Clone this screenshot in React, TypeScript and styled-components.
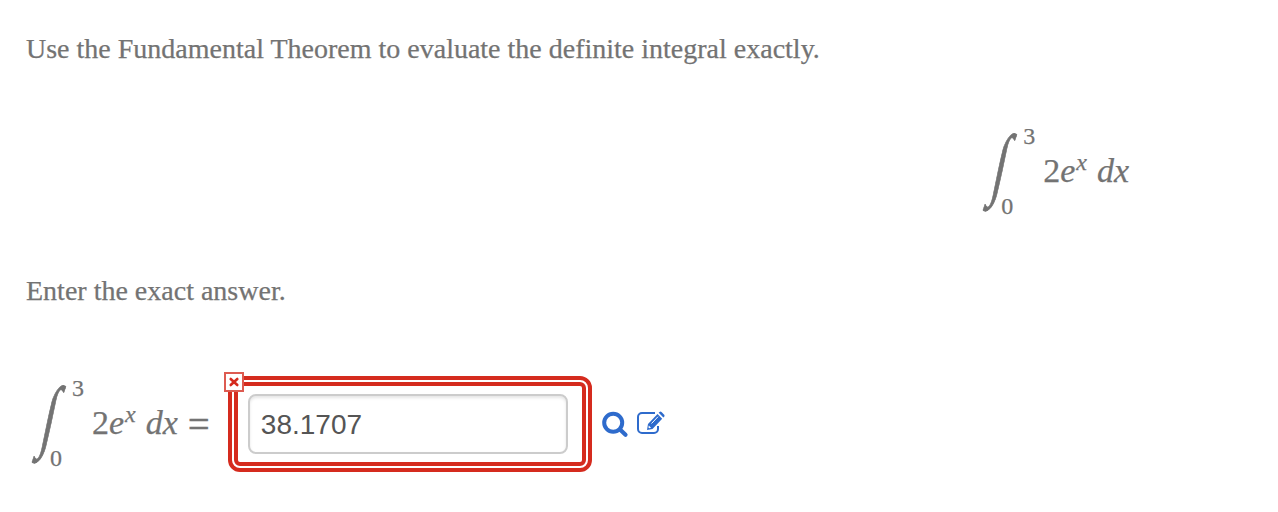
import styled, { createGlobalStyle } from "styled-components";

const GlobalStyle = createGlobalStyle`
  * {
    box-sizing: border-box;
  }

  body {
    margin: 0;
    background: white;
    color: #737373;
    font-family: "Liberation Serif", "Times New Roman", serif;
  }
`;

const Page = styled.main`
  display: flex;
  flex-direction: column;
  height: 512px;
  padding: 34px 26px 0;
`;

const Prompt = styled.p`
  margin: 0;
  font-size: 28px;
  line-height: 30px;
  white-space: nowrap;
  -webkit-text-stroke: 0.25px #737373;
`;

const CenteredMath = styled.div`
  display: flex;
  justify-content: flex-end;
  margin: 60px 123px 58px 0;
`;

const AnswerRow = styled.div`
  display: flex;
  align-items: flex-start;
  margin-top: 70px;
`;

const Formula = styled.div`
  display: flex;
  height: 94px;
  padding-left: 6px;
  -webkit-text-stroke: 0.25px #737373;
`;

const IntegralSign = styled.span`
  display: flex;
  justify-content: center;
  width: 34px;
  height: 79px;
  margin-right: 6px;
  font-size: 79px;
  line-height: 80px;
  transform: skewX(-12deg) scaleX(0.6);
  transform-origin: 50% 48px;
  -webkit-text-stroke: 1px #737373;
`;

const Limits = styled.div`
  display: flex;
  flex-direction: column;
  justify-content: space-between;
  width: 20px;
  font-size: 24px;
  line-height: 24px;
`;

const LowerLimit = styled.span`
  margin-left: -22px;
`;

const Integrand = styled.div`
  padding-top: 30px;
  font-size: 34px;
  line-height: 34px;
  white-space: nowrap;
`;

const Exponent = styled.sup`
  position: relative;
  top: -12px;
  margin: 0 10px 0 1px;
  font-size: 24px;
  line-height: 0;
  vertical-align: baseline;
`;

const Equals = styled.span`
  display: inline-block;
  width: 22px;
  margin-left: 10px;
  font-size: 39px;
  line-height: 0;
  vertical-align: -4px;
  -webkit-text-stroke: 0.3px #737373;
`;

const IncorrectBox = styled.div`
  position: relative;
  width: 364px;
  height: 96px;
  margin-left: 18px;
  padding: 4px;
  border: 4px solid #d52b1e;
  border-radius: 12px;
`;

const InnerBorder = styled.div`
  height: 84px;
  margin: -2px;
  padding: 8px 10px;
  border: 4px solid #d52b1e;
  border-radius: 6px;
`;

const AnswerInput = styled.input`
  display: block;
  width: 320px;
  height: 60px;
  padding: 2px 11px 0;
  border: 2px solid #ccc;
  border-radius: 8px;
  box-shadow: inset 0 2px 3px rgba(0, 0, 0, 0.1);
  color: #555;
  font-family: "Liberation Sans", Arial, sans-serif;
  font-size: 28px;
  outline: none;
`;

const Badge = styled.span`
  position: absolute;
  top: -8px;
  left: -8px;
  width: 20px;
  height: 20px;
  border: 2px solid #dd5b51;
  background: white;

  svg {
    display: block;
  }
`;

const Tools = styled.div`
  display: flex;
  gap: 8px;
  margin: 34px 0 0 10px;
  color: #2e6bcc;

  svg {
    display: block;
  }
`;

const IntegralExpression = ({ equals }: { equals?: boolean }) => (
  <Formula>
    <IntegralSign>∫</IntegralSign>
    <Limits>
      <span>3</span>
      <LowerLimit>0</LowerLimit>
    </Limits>
    <Integrand>
      2<i>e</i>
      <Exponent>
        <i>x</i>
      </Exponent>
      <i>dx</i>
      {equals && <Equals>=</Equals>}
    </Integrand>
  </Formula>
);

const App = () => {
  return (
    <Page>
      <GlobalStyle />
      <Prompt>
        Use the Fundamental Theorem to evaluate the definite integral exactly.
      </Prompt>
      <CenteredMath>
        <IntegralExpression />
      </CenteredMath>
      <Prompt>Enter the exact answer.</Prompt>
      <AnswerRow>
        <IntegralExpression equals />
        <IncorrectBox>
          <InnerBorder>
            <AnswerInput defaultValue="38.1707" aria-label="Answer" />
          </InnerBorder>
          <Badge>
            <svg width="16" height="16" viewBox="0 0 16 16">
              <path
                d="m4.7 5 6.6 6M11.3 5l-6.6 6"
                stroke="#d52b1e"
                strokeWidth="2.6"
                strokeLinecap="round"
              />
            </svg>
          </Badge>
        </IncorrectBox>
        <Tools>
          <svg width="27" height="28" viewBox="0 0 27 28" fill="none">
            <circle
              cx="11.2"
              cy="12.8"
              r="9"
              stroke="currentColor"
              strokeWidth="4"
            />
            <path
              d="m18 19.5 5.5 5.2"
              stroke="currentColor"
              strokeWidth="4.2"
              strokeLinecap="round"
            />
          </svg>
          <svg width="29" height="28" viewBox="0 0 29 28" fill="none">
            <path
              d="M18 3H5a4 4 0 0 0-4 4v12a4 4 0 0 0 4 4h12a4 4 0 0 0 4-4v-3"
              stroke="currentColor"
              strokeWidth="2"
            />
            <path d="m10 20 1-6L20.5 4l4.7 4.7-9.7 10.3z" fill="currentColor" />
            <path
              d="m21.7 2.8.8-.8q1-.8 2 0l2.7 2.7q.8 1 0 2l-.8.8z"
              fill="currentColor"
            />
            <path d="m14.5 13.5 6.5-6.8" stroke="white" strokeWidth="1" />
            <path d="m11.8 15.6 2.2 2.2-1.6.5-1-.9z" fill="white" />
          </svg>
        </Tools>
      </AnswerRow>
    </Page>
  );
};

export default App;
